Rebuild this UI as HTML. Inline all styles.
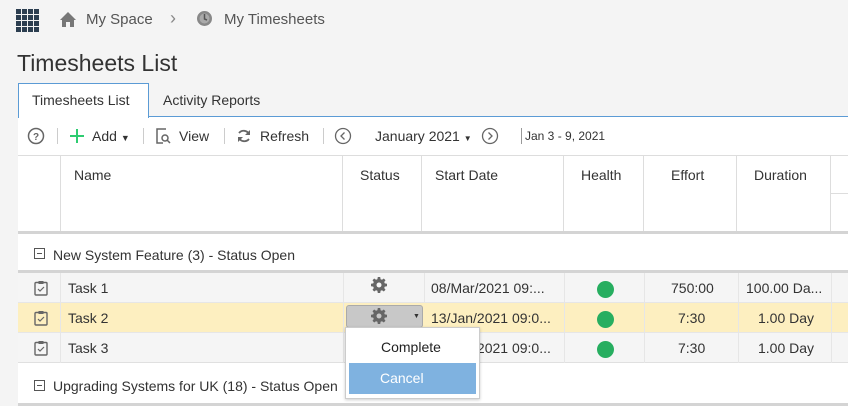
<!DOCTYPE html>
<html><head><style>
*{box-sizing:border-box;margin:0;padding:0}
body{width:848px;height:406px;overflow:hidden;background:#f4f4f4;font-family:"Liberation Sans",sans-serif;color:#333;position:relative}
.a{position:absolute}
.t{font-size:14px;white-space:nowrap}
.vl{position:absolute;width:1px;background:#ddd}
</style></head><body>
<svg class="a" style="left:16px;top:9px" width="23" height="23">
<g fill="#2c3e50">
<rect x="0" y="0" width="5" height="5"/><rect x="6" y="0" width="5" height="5"/><rect x="12" y="0" width="5" height="5"/><rect x="18" y="0" width="5" height="5"/>
<rect x="0" y="6" width="5" height="5"/><rect x="6" y="6" width="5" height="5"/><rect x="12" y="6" width="5" height="5"/><rect x="18" y="6" width="5" height="5"/>
<rect x="0" y="12" width="5" height="5"/><rect x="6" y="12" width="5" height="5"/><rect x="12" y="12" width="5" height="5"/><rect x="18" y="12" width="5" height="5"/>
<rect x="0" y="18" width="5" height="5"/><rect x="6" y="18" width="5" height="5"/><rect x="12" y="18" width="5" height="5"/><rect x="18" y="18" width="5" height="5"/>
</g></svg>
<svg class="a" style="left:59px;top:11px" width="18" height="17"><path d="M9 1 L1 9 H3 V16 H7 V11 H11 V16 H15 V9 H17 Z" fill="#777"/></svg>
<div class="a t" style="left:86px;top:11px;font-size:15px;color:#555">My Space</div>
<div class="a t" style="left:170px;top:8px;font-size:18px;color:#888">&#x203A;</div>
<svg class="a" style="left:196px;top:10px" width="17" height="17"><circle cx="8.5" cy="8.5" r="7.5" fill="#888"/><circle cx="8.5" cy="8.5" r="5" fill="#aaa"/><path d="M8.5 4 V9 L11 10" stroke="#555" stroke-width="1.5" fill="none"/></svg>
<div class="a t" style="left:224px;top:11px;font-size:15px;color:#555">My Timesheets</div>
<div class="a t" style="left:17px;top:50px;font-size:23px;color:#333">Timesheets List</div>
<div class="a" style="left:18px;top:116px;width:830px;height:290px;background:#fff;border-top:1px solid #5b9bd5"></div>
<div class="a" style="left:18px;top:83px;width:131px;height:35px;background:#fff;border:1px solid #5b9bd5;border-bottom:none"></div>
<div class="a t" style="left:32px;top:92px">Timesheets List</div>
<div class="a t" style="left:163px;top:92px">Activity Reports</div>
<svg class="a" style="left:27px;top:127px" width="18" height="18"><circle cx="9" cy="9" r="7.5" stroke="#666" stroke-width="1.5" fill="none"/><text x="9" y="13" font-size="10" text-anchor="middle" fill="#666" font-family="Liberation Sans" font-weight="bold">?</text></svg>
<div class="vl" style="left:57px;top:128px;height:16px;background:#ccc"></div>
<svg class="a" style="left:69px;top:128px" width="16" height="16"><path d="M8 1V15M1 8H15" stroke="#2ecc71" stroke-width="2"/></svg>
<div class="a t" style="left:92px;top:128px">Add <span style="font-size:9px">&#9660;</span></div>
<div class="vl" style="left:143px;top:128px;height:16px;background:#ccc"></div>
<svg class="a" style="left:155px;top:128px" width="16" height="16"><path d="M11 1H2V15H8" stroke="#666" stroke-width="1.5" fill="none"/><circle cx="10" cy="10" r="3" stroke="#666" stroke-width="1.5" fill="none"/><path d="M12 12L15 15" stroke="#666" stroke-width="1.5"/></svg>
<div class="a t" style="left:179px;top:128px">View</div>
<div class="vl" style="left:224px;top:128px;height:16px;background:#ccc"></div>
<svg class="a" style="left:236px;top:128px" width="16" height="16"><path d="M13 6A6 6 0 0 0 3 5M3 10A6 6 0 0 0 13 11" stroke="#666" stroke-width="1.8" fill="none"/><path d="M14 2V7H9Z M2 14V9H7Z" fill="#666"/></svg>
<div class="a t" style="left:260px;top:128px">Refresh</div>
<div class="vl" style="left:323px;top:128px;height:16px;background:#ccc"></div>
<svg class="a" style="left:334px;top:127px" width="18" height="18"><circle cx="9" cy="9" r="7.5" stroke="#666" stroke-width="1.3" fill="none"/><path d="M10.5 5.5L7 9L10.5 12.5" stroke="#666" stroke-width="1.3" fill="none"/></svg>
<div class="a t" style="left:375px;top:128px">January 2021 <span style="font-size:8px">&#9660;</span></div>
<svg class="a" style="left:481px;top:127px" width="18" height="18"><circle cx="9" cy="9" r="7.5" stroke="#666" stroke-width="1.3" fill="none"/><path d="M7.5 5.5L11 9L7.5 12.5" stroke="#666" stroke-width="1.3" fill="none"/></svg>
<div class="vl" style="left:521px;top:128px;height:16px;background:#999"></div>
<div class="a t" style="left:525px;top:129px;font-size:12px">Jan 3 - 9, 2021</div>
<div class="a" style="left:18px;top:155px;width:830px;height:1px;background:#ddd"></div>
<div class="vl" style="left:60px;top:155px;height:76px"></div>
<div class="vl" style="left:342px;top:155px;height:76px"></div>
<div class="vl" style="left:421px;top:155px;height:76px"></div>
<div class="vl" style="left:563px;top:155px;height:76px"></div>
<div class="vl" style="left:643px;top:155px;height:76px"></div>
<div class="vl" style="left:736px;top:155px;height:76px"></div>
<div class="vl" style="left:830px;top:155px;height:76px"></div>
<div class="a" style="left:831px;top:193px;width:17px;height:1px;background:#ddd"></div>
<div class="a t" style="left:74px;top:167px">Name</div>
<div class="a t" style="left:360px;top:167px">Status</div>
<div class="a t" style="left:435px;top:167px">Start Date</div>
<div class="a t" style="left:581px;top:167px">Health</div>
<div class="a t" style="left:671px;top:167px">Effort</div>
<div class="a t" style="left:754px;top:167px">Duration</div>
<div class="a" style="left:18px;top:231px;width:830px;height:3px;background:#d4d4d4"></div>
<svg class="a" style="left:34px;top:248px" width="11" height="11"><rect x="0.5" y="0.5" width="10" height="10" stroke="#555" fill="none"/><path d="M3 5.5H8" stroke="#555"/></svg>
<div class="a t" style="left:53px;top:247px">New System Feature (3) - Status Open</div>
<div class="a" style="left:18px;top:270px;width:830px;height:3px;background:#d4d4d4"></div>
<div class="a" style="left:18px;top:273px;width:830px;height:30px;background:#f5f5f5;border-bottom:1px solid #e6e6e6"></div>
<div class="a" style="left:18px;top:303px;width:830px;height:30px;background:#fdefc0;border-bottom:1px solid #e6e6e6"></div>
<div class="a" style="left:18px;top:333px;width:830px;height:30px;background:#f5f5f5;border-bottom:1px solid #e0e0e0"></div>
<div class="vl" style="left:60px;top:273px;height:90px;background:#e6e6e6"></div>
<div class="vl" style="left:343px;top:273px;height:90px;background:#e6e6e6"></div>
<div class="vl" style="left:564px;top:273px;height:90px;background:#e6e6e6"></div>
<div class="vl" style="left:644px;top:273px;height:90px;background:#e6e6e6"></div>
<div class="vl" style="left:738px;top:273px;height:90px;background:#e6e6e6"></div>
<div class="vl" style="left:831px;top:273px;height:90px;background:#e6e6e6"></div>
<div class="vl" style="left:424px;top:273px;height:30px;background:#e6e6e6"></div>
<svg class="a" style="left:34px;top:280px" width="14" height="16"><rect x="1" y="2.5" width="12" height="12.5" rx="1" stroke="#666" stroke-width="1.4" fill="none"/><rect x="4.5" y="1" width="5" height="3" fill="#666"/><path d="M4 9L6 11L10 7" stroke="#666" stroke-width="1.2" fill="none"/></svg>
<svg class="a" style="left:34px;top:310px" width="14" height="16"><rect x="1" y="2.5" width="12" height="12.5" rx="1" stroke="#666" stroke-width="1.4" fill="none"/><rect x="4.5" y="1" width="5" height="3" fill="#666"/><path d="M4 9L6 11L10 7" stroke="#666" stroke-width="1.2" fill="none"/></svg>
<svg class="a" style="left:34px;top:340px" width="14" height="16"><rect x="1" y="2.5" width="12" height="12.5" rx="1" stroke="#666" stroke-width="1.4" fill="none"/><rect x="4.5" y="1" width="5" height="3" fill="#666"/><path d="M4 9L6 11L10 7" stroke="#666" stroke-width="1.2" fill="none"/></svg>
<div class="a t" style="left:68px;top:280px">Task 1</div>
<div class="a t" style="left:68px;top:310px">Task 2</div>
<div class="a t" style="left:68px;top:340px">Task 3</div>
<svg class="a" style="left:371px;top:277px" width="16" height="16" viewBox="0 0 16 16"><path fill="#666" d="M6.8 0h2.4l.4 2.2 1.4.6 1.8-1.3 1.7 1.7-1.3 1.8.6 1.4 2.2.4v2.4l-2.2.4-.6 1.4 1.3 1.8-1.7 1.7-1.8-1.3-1.4.6-.4 2.2H6.8l-.4-2.2-1.4-.6-1.8 1.3-1.7-1.7 1.3-1.8-.6-1.4L0 9.2V6.8l2.2-.4.6-1.4-1.3-1.8 1.7-1.7 1.8 1.3 1.4-.6z"/><circle cx="8" cy="8" r="2.5" fill="#f5f5f5"/></svg>
<div class="a" style="left:346px;top:305px;width:77px;height:23px;background:#c8c8c8;border:1px solid #aaa;border-radius:3px"></div>
<svg class="a" style="left:371px;top:308px" width="16" height="16" viewBox="0 0 16 16"><path fill="#666" d="M6.8 0h2.4l.4 2.2 1.4.6 1.8-1.3 1.7 1.7-1.3 1.8.6 1.4 2.2.4v2.4l-2.2.4-.6 1.4 1.3 1.8-1.7 1.7-1.8-1.3-1.4.6-.4 2.2H6.8l-.4-2.2-1.4-.6-1.8 1.3-1.7-1.7 1.3-1.8-.6-1.4L0 9.2V6.8l2.2-.4.6-1.4-1.3-1.8 1.7-1.7 1.8 1.3 1.4-.6z"/><circle cx="8" cy="8" r="2.5" fill="#c8c8c8"/></svg>
<div class="a" style="left:413px;top:313px;font-size:7px;color:#333">&#9660;</div>
<div class="a t" style="left:431px;top:280px">08/Mar/2021 09:...</div>
<div class="a t" style="left:431px;top:310px">13/Jan/2021 09:0...</div>
<div class="a t" style="left:431px;top:340px">13/Jan/2021 09:0...</div>
<div class="a" style="left:597px;top:281px;width:17px;height:17px;border-radius:50%;background:#27ae60"></div>
<div class="a" style="left:597px;top:311px;width:17px;height:17px;border-radius:50%;background:#27ae60"></div>
<div class="a" style="left:597px;top:341px;width:17px;height:17px;border-radius:50%;background:#27ae60"></div>
<div class="a t" style="left:671px;top:280px">750:00</div>
<div class="a t" style="left:678px;top:310px">7:30</div>
<div class="a t" style="left:678px;top:340px">7:30</div>
<div class="a t" style="left:746px;top:280px">100.00 Da...</div>
<div class="a t" style="left:758px;top:310px">1.00 Day</div>
<div class="a t" style="left:758px;top:340px">1.00 Day</div>
<svg class="a" style="left:34px;top:380px" width="11" height="11"><rect x="0.5" y="0.5" width="10" height="10" stroke="#555" fill="none"/><path d="M3 5.5H8" stroke="#555"/></svg>
<div class="a t" style="left:53px;top:378px">Upgrading Systems for UK (18) - Status Open</div>
<div class="a" style="left:18px;top:403px;width:830px;height:3px;background:#d4d4d4"></div>
<div class="a" style="left:345px;top:327px;width:135px;height:72px;background:#fff;border:1px solid #ccc;box-shadow:0 1px 3px rgba(0,0,0,.2)"></div>
<div class="a t" style="left:381px;top:339px;color:#222">Complete</div>
<div class="a" style="left:349px;top:363px;width:127px;height:31px;background:#7fb2e0"></div>
<div class="a t" style="left:380px;top:370px;color:#fff">Cancel</div>
</body></html>
